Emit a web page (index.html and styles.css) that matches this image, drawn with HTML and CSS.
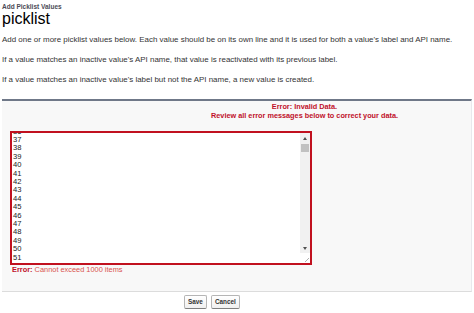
FILE: index.html
```html
<!DOCTYPE html>
<html>
<head>
<meta charset="utf-8">
<link rel="stylesheet" href="styles.css">
</head>
<body>
<div class="header">
  <div class="crumb">Add Picklist Values</div>
  <h1 class="title">picklist</h1>
</div>
<div class="intro">
  <p>Add one or more picklist values below. Each value should be on its own line and it is used for both a value's label and API name.</p>
  <p>If a value matches an inactive value's API name, that value is reactivated with its previous label.</p>
  <p>If a value matches an inactive value's label but not the API name, a new value is created.</p>
</div>
<div class="panel">
  <div class="page-errors">
    <div class="strong">Error: Invalid Data.</div>
    <div class="strong">Review all error messages below to correct your data.</div>
  </div>
  <div class="field">
    <div class="textarea">
      <div class="lines">
        <div>36</div><div>37</div><div>38</div><div>39</div><div>40</div><div>41</div><div>42</div><div>43</div><div>44</div><div>45</div><div>46</div><div>47</div><div>48</div><div>49</div><div>50</div><div>51</div>
      </div>
      <div class="scrollbar">
        <div class="arrow up"></div>
        <div class="track"><div class="thumb"></div></div>
        <div class="arrow down"></div>
        <div class="corner"></div>
      </div>
    </div>
    <div class="field-error"><b>Error:</b> Cannot exceed 1000 items</div>
  </div>
</div>
<div class="buttons">
  <button class="btn">Save</button>
  <button class="btn">Cancel</button>
</div>
</body>
</html>
```
FILE: styles.css
```css
html, body {
  margin: 0;
  padding: 0;
  background: #ffffff;
  font-family: "Liberation Sans", Arial, sans-serif;
  color: #333333;
}
.header {
  padding: 3px 2px 0 2px;
}
.crumb {
  font-size: 6.5px;
  font-weight: bold;
  color: #4a4a56;
  line-height: 8px;
}
.title {
  margin: 0;
  font-size: 16px;
  font-weight: normal;
  color: #000000;
  line-height: 16px;
}
.intro {
  padding: 8px 2px 0 2px;
}
.intro p {
  margin: 0 0 11px 0;
  font-size: 7.95px;
  line-height: 9px;
  color: #333333;
  white-space: nowrap;
}
.panel {
  margin: 15px 2px 0 2px;
  width: 470px;
  border-top: 2px solid #6f7888;
  border-bottom: 1px solid #dcdcdc;
  border-right: 1px solid #e8e8ec;
  background: #f8f8f8;
  height: 193px;
  box-sizing: border-box;
}
.page-errors {
  padding: 1px 0 0 136px;
  text-align: center;
  color: #c0102a;
  font-size: 7.3px;
  line-height: 9px;
}
.strong {
  font-weight: bold;
}
.field {
  padding: 11px 0 0 8px;
}
.textarea {
  width: 302px;
  height: 134px;
  box-sizing: border-box;
  border: 2px solid #c1111f;
  background: #ffffff;
  display: flex;
  overflow: hidden;
}
.lines {
  flex: 1;
  margin-top: -5.5px;
  padding-left: 1px;
  font-size: 7.6px;
  line-height: 8.4px;
  color: #222222;
}
.scrollbar {
  width: 10px;
  background: #f1f1f1;
  display: flex;
  flex-direction: column;
}
.arrow {
  height: 10px;
  display: flex;
  align-items: center;
  justify-content: center;
}
.arrow::after {
  content: "";
  width: 0;
  height: 0;
  border-left: 2.5px solid transparent;
  border-right: 2.5px solid transparent;
}
.up::after {
  border-bottom: 3px solid #505050;
}
.down::after {
  border-top: 3px solid #505050;
}
.track {
  flex: 1;
  padding: 0 1px;
}
.thumb {
  margin-top: 1px;
  height: 8px;
  background: #c1c1c1;
}
.corner {
  height: 10px;
  background: #ffffff;
  position: relative;
}
.corner::after {
  content: "";
  position: absolute;
  right: 1px;
  bottom: 1px;
  width: 4px;
  height: 4px;
  background: linear-gradient(135deg, transparent 45%, #b0b0b0 46%, #b0b0b0 54%, transparent 55%, transparent 75%, #b0b0b0 76%, #b0b0b0 84%, transparent 85%);
}
.field-error {
  padding: 0 0 0 2px;
  font-size: 7.4px;
  line-height: 9px;
  color: #d9534f;
}
.field-error b {
  color: #c0102a;
}
.buttons {
  display: flex;
  gap: 4px;
  padding: 3px 0 0 184px;
}
.btn {
  font-family: "Liberation Sans", Arial, sans-serif;
  font-size: 6.4px;
  font-weight: bold;
  color: #333333;
  height: 14px;
  padding: 0 3px;
  border: 1px solid #b5b5b5;
  border-bottom-color: #7f7f7f;
  border-radius: 2px;
  background: linear-gradient(#ffffff, #f0f0f0);
  line-height: 12px;
}
```
